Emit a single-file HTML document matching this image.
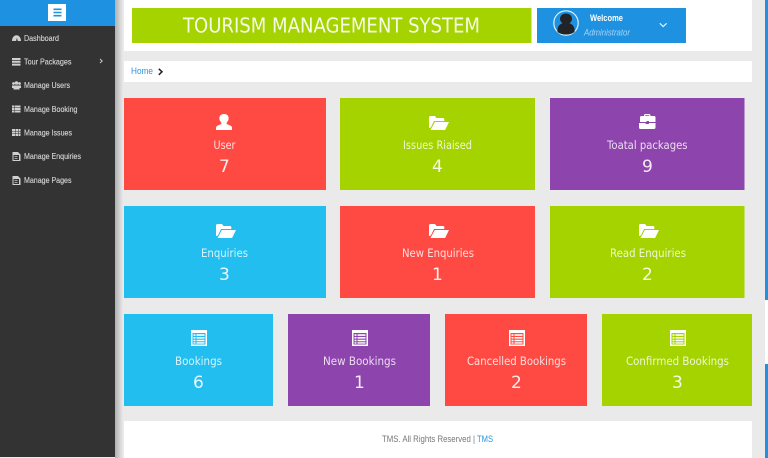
<!DOCTYPE html>
<html lang="en">
<head>
<meta charset="utf-8">
<title>Tourism Management System</title>
<style>
html,body{margin:0;padding:0;width:768px;height:458px;overflow:hidden;background:#eaeaea}
svg{display:block}
.m{font-family:"DejaVu Sans","Liberation Sans",sans-serif;fill:#fff;text-anchor:start}
.l{font-size:11.5px;fill-opacity:.82}
.n{font-size:17px;fill-opacity:.9}
.s{font-family:"Liberation Sans",sans-serif;font-size:8.5px;fill:#d8d8d8;stroke:#d8d8d8;stroke-width:.12}
.f{font-family:"Liberation Sans",sans-serif;font-size:9px}
</style>
</head>
<body>
<svg width="768" height="458" viewBox="0 0 768 458" xmlns="http://www.w3.org/2000/svg">
<defs>
<linearGradient id="sh" x1="0" x2="1" y1="0" y2="0"><stop offset="0" stop-color="#b0b0b0"/><stop offset="1" stop-color="#eaeaea"/></linearGradient>
<g id="folder" fill="#fff">
<path d="M0 13V2.500C0 1.600.6 1 1.500 1H6l1.500 2H14c.8 0 1.300.5 1.300 1.300V6H5L1.800 12.500z"/>
<path d="M5.800 7H20l-3.600 7.400c-.2.4-.5.6-1 .6H1.500z"/>
</g>
<g id="list">
<rect x="0" y="0" width="16" height="16" fill="#fff"/>
<rect x="1.500" y="3" width="13" height="11.500" fill="currentColor"/>
<path d="M2.500 4.300h2v1.600h-2zM5.500 4.300h8v1.600h-8zM2.500 7h2v1.600h-2zM5.500 7h8v1.600h-8zM2.500 9.700h2v1.600h-2zM5.500 9.700h8v1.600h-8zM2.500 12.200h2v1.400h-2zM5.500 12.200h8v1.400h-8z" fill="#fff"/>
</g>
</defs>

<rect width="768" height="458" fill="#eaeaea"/>

<!-- sidebar -->
<rect x="115" y="0" width="8" height="458" fill="url(#sh)"/>
<rect x="0" y="0" width="115" height="457" fill="#333"/>
<rect x="0" y="0" width="115" height="26" fill="#1e92e0"/>
<rect x="48" y="4" width="18" height="17" fill="#fff"/>
<path d="M53.500 8.500h8v1.600h-8zM53.500 11.700h8v1.600h-8zM53.500 14.900h8v1.600h-8z" fill="#1e92e0"/>

<g fill="#d0d0d0">
<path d="M12 41c0-3.400 2-5.800 4.500-5.800S21 37.600 21 41h-3.200l-.9-3.200-.8 3.200H15v-.1z"/>
<path d="M12 58h8.500v2H12zM12 60.800h8.500v2H12zM12 63.600h8.500v2H12z"/>
<circle cx="16.500" cy="83" r="1.800"/><circle cx="13.500" cy="83.500" r="1.400"/><circle cx="19.500" cy="83.500" r="1.400"/>
<path d="M12 85.500h9v2.500h-1.500v1.500h-6V88H12z"/>
<path d="M12 105.500h8.500v7H12z"/>
<path d="M12 129h8.500v7H12z"/>
<path d="M12.500 152h5.500l2.500 2.500v6.500h-8z"/>
<path d="M12.500 176h5.500l2.500 2.500v6.500h-8z"/>
</g>
<g fill="#333">
<path d="M12 107.500h8.500v.5H12zM12 110h8.500v.5H12zM14 105.500h.5v7H14z"/>
<path d="M12 131h8.500v.5H12zM12 133.500h8.500v.5H12zM15 129h.5v7H15zM18 129h.5v7H18z"/>
<path d="M13.500 155h5.500v5h-5.500z"/>
<path d="M13.500 179h5.500v5h-5.500z"/>
</g>
<g fill="#d0d0d0"><path d="M14.500 156h3v.7h-3zM14.500 158h3v.7h-3zM14.500 180h3v.7h-3zM14.500 182h3v.7h-3z"/></g>

<text class="s" x="24" y="41" textLength="35" lengthAdjust="spacingAndGlyphs">Dashboard</text>
<text class="s" x="24" y="64.500" textLength="47.500" lengthAdjust="spacingAndGlyphs">Tour Packages</text>
<text class="s" x="24" y="88" textLength="46" lengthAdjust="spacingAndGlyphs">Manage Users</text>
<text class="s" x="24" y="112" textLength="53.500" lengthAdjust="spacingAndGlyphs">Manage Booking</text>
<text class="s" x="24" y="135.500" textLength="48" lengthAdjust="spacingAndGlyphs">Manage Issues</text>
<text class="s" x="24" y="159" textLength="57" lengthAdjust="spacingAndGlyphs">Manage Enquiries</text>
<text class="s" x="24" y="183" textLength="47.500" lengthAdjust="spacingAndGlyphs">Manage Pages</text>
<path d="M100 59l2.200 2-2.200 2" fill="none" stroke="#c9c9c9" stroke-width="1"/>

<!-- right edge -->
<rect x="765" y="0" width="3" height="300" fill="#1e92e0"/>
<rect x="765" y="300" width="3" height="64" fill="#fff"/>
<rect x="765" y="364" width="3" height="94" fill="#1e92e0"/>

<!-- header -->
<rect x="124" y="0" width="628" height="51" fill="#fff"/>
<rect x="132" y="8" width="399.500" height="35" fill="#a4d300"/>
<text class="m" x="183" y="32.500" font-size="20" fill-opacity=".9" textLength="297" lengthAdjust="spacingAndGlyphs">TOURISM MANAGEMENT SYSTEM</text>
<rect x="537" y="8" width="149" height="35" fill="#1e92e0"/>
<circle cx="566" cy="23" r="12.200" fill="#1e92e0" stroke="#e0f0fb" stroke-width="1.200"/>
<path d="M557.500 32c-.6-5 1.800-7.700 5-8.700-1.700-1.200-2.500-2.800-2.500-4.500 0-3 2.500-5.300 6-5.300s6 2.300 6 5.300c0 1.700-.8 3.300-2.500 4.500 3.200 1 5.600 3.700 5 8.700-2.200 1.700-5 2.500-8.500 2.500s-6.300-.8-8.500-2.500z" fill="#232327"/>
<text class="f" x="590" y="21" font-weight="700" fill="#fff" textLength="33" lengthAdjust="spacingAndGlyphs">Welcome</text>
<text class="f" x="584" y="35.500" font-style="italic" fill="#a9d5f5" textLength="46" lengthAdjust="spacingAndGlyphs">Administrator</text>
<path d="M659.800 23.300l3.400 3.300 3.400-3.300" fill="none" stroke="#e4f1fb" stroke-width="1.200"/>

<!-- breadcrumb -->
<rect x="124" y="61" width="628" height="21" fill="#fff"/>
<text class="f" x="131" y="74" fill="#2b92dc" textLength="22" lengthAdjust="spacingAndGlyphs">Home</text>
<path d="M158.800 68.800l3.200 3-3.200 3" fill="none" stroke="#222" stroke-width="1.500"/>

<!-- row 1 -->
<rect x="124" y="98" width="202" height="92" fill="#ff4a43"/>
<rect x="340" y="98" width="195" height="92" fill="#a4d300"/>
<rect x="550" y="98" width="194.500" height="92" fill="#8e44ad"/>
<!-- row 2 -->
<rect x="124" y="206" width="202" height="92" fill="#22beef"/>
<rect x="340" y="206" width="195" height="92" fill="#ff4a43"/>
<rect x="550" y="206" width="194.500" height="92" fill="#a4d300"/>
<!-- row 3 -->
<rect x="124" y="314" width="149" height="92" fill="#22beef"/>
<rect x="288" y="314" width="142" height="92" fill="#8e44ad"/>
<rect x="445" y="314" width="142" height="92" fill="#ff4a43"/>
<rect x="602" y="314" width="150" height="92" fill="#a4d300"/>

<!-- icons -->
<path d="M216 130v-2.300c0-1.200 1-2 2.600-2.600l2.600-1c.3-.8.200-1.500-.4-2.200-1-1-1.400-2.300-1.400-3.700 0-2.700 1.700-4.200 4.600-4.200s4.600 1.500 4.600 4.200c0 1.400-.4 2.700-1.400 3.700-.6.700-.7 1.400-.4 2.200l2.600 1c1.600.6 2.600 1.400 2.600 2.600v2.300z" fill="#fff"/>
<use href="#folder" x="429" y="115"/>
<use href="#folder" x="216" y="223"/>
<use href="#folder" x="429" y="223"/>
<use href="#folder" x="639" y="223"/>
<path d="M644 116v-.6c0-.8.600-1.400 1.400-1.400h3.700c.8 0 1.400.6 1.400 1.400v.6h3.500c1 0 1.500.6 1.500 1.500v4.500h-6.500v-1h-2.500v1h-6.500v-4.500c0-.9.500-1.500 1.500-1.500zm1.200 0h4.100v-.8h-4.100zM639 123h6.500v1h3.500v-1h6.500v4.500c0 1-.6 1.500-1.500 1.500h-13.500c-.9 0-1.500-.5-1.500-1.500z" fill="#fff"/>
<use href="#list" x="191" y="330" color="#22beef"/>
<use href="#list" x="352" y="330" color="#8e44ad"/>
<use href="#list" x="509" y="330" color="#ff4a43"/>
<use href="#list" x="670" y="330" color="#a4d300"/>

<!-- labels row 1 -->
<text class="m l" x="213.500" y="149" textLength="22" lengthAdjust="spacingAndGlyphs">User</text>
<text class="m n" x="219" y="172">7</text>
<text class="m l" x="403" y="149" textLength="69" lengthAdjust="spacingAndGlyphs">Issues Riaised</text>
<text class="m n" x="432" y="172">4</text>
<text class="m l" x="607" y="149" textLength="80.500" lengthAdjust="spacingAndGlyphs">Toatal packages</text>
<text class="m n" x="642" y="172">9</text>
<!-- labels row 2 -->
<text class="m l" x="201" y="257" textLength="47" lengthAdjust="spacingAndGlyphs">Enquiries</text>
<text class="m n" x="219" y="280">3</text>
<text class="m l" x="402" y="257" textLength="72" lengthAdjust="spacingAndGlyphs">New Enquiries</text>
<text class="m n" x="432" y="280">1</text>
<text class="m l" x="610" y="257" textLength="76" lengthAdjust="spacingAndGlyphs">Read Enquiries</text>
<text class="m n" x="642" y="280">2</text>
<!-- labels row 3 -->
<text class="m l" x="175" y="365" textLength="47" lengthAdjust="spacingAndGlyphs">Bookings</text>
<text class="m n" x="193" y="388">6</text>
<text class="m l" x="323" y="365" textLength="73" lengthAdjust="spacingAndGlyphs">New Bookings</text>
<text class="m n" x="354" y="388">1</text>
<text class="m l" x="467" y="365" textLength="99" lengthAdjust="spacingAndGlyphs">Cancelled Bookings</text>
<text class="m n" x="511" y="388">2</text>
<text class="m l" x="626" y="365" textLength="103" lengthAdjust="spacingAndGlyphs">Confirmed Bookings</text>
<text class="m n" x="672" y="388">3</text>

<!-- footer -->
<rect x="124" y="421" width="628" height="37" fill="#fff"/>
<text class="f" x="382" y="442" fill="#777" textLength="93" lengthAdjust="spacingAndGlyphs">TMS. All Rights Reserved |</text>
<text class="f" x="477" y="442" fill="#2b92dc" textLength="16" lengthAdjust="spacingAndGlyphs">TMS</text>
</svg>
</body>
</html>
